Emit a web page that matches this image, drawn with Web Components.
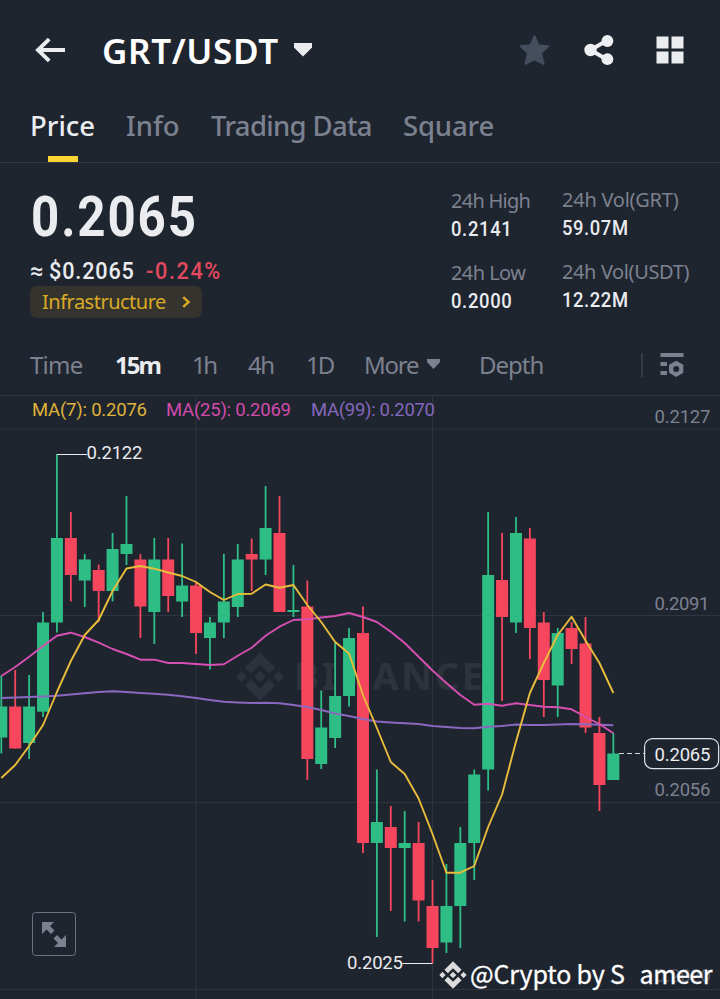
<!DOCTYPE html>
<html lang="en">
<head>
<meta charset="utf-8">
<title>GRT/USDT</title>
<style>
  body {
    margin: 0;
    background: #1f252f;
    color: #eaecef;
    font-family: "Noto Sans", sans-serif;
    --muted: #7c8190;
  }
</style>
</head>
<body>
<pair-app></pair-app>

<script>
// One line of text, tracked so that it fills the width given in "w".
// "squeeze" narrows the glyphs, for the condensed numerals.
class FitText extends HTMLElement {
  constructor() {
    super();
    this.attachShadow({ mode: 'open' });
  }

  connectedCallback() {
    const w = Number(this.getAttribute('w'));
    const squeeze = Number(this.getAttribute('squeeze') || 1);
    this.shadowRoot.innerHTML = `
      <style>
        :host { display: block; flex: none; width: ${w}px; white-space: nowrap; }
        span { display: block; width: max-content; transform: scaleX(${squeeze}); transform-origin: 0 50%; }
      </style>
      <span><slot></slot></span>
    `;
    const span = this.shadowRoot.querySelector('span');
    const natural = span.offsetWidth;
    span.style.letterSpacing = `${(w / squeeze - natural) / this.textContent.length}px`;
  }
}

class PairHeader extends HTMLElement {
  constructor() {
    super();
    this.attachShadow({ mode: 'open' });
  }

  connectedCallback() {
    this.shadowRoot.innerHTML = `
      <style>
        :host { display: flex; align-items: center; height: 100px; padding: 0 36px 0 35px; box-sizing: border-box; }
        svg { display: block; flex: none; }
        .title { margin: 2px 15px 0 37px; font-size: 35px; font-weight: 650; line-height: 50px; color: #fff; }
        .actions { display: flex; align-items: center; margin-left: auto; }
        .share { margin: 0 42px 0 34px; }
      </style>
      <svg width="30" height="26" viewBox="0 0 30 26" fill="none" stroke="#eaecef" stroke-width="3.9">
        <path d="M30 13H3M14.2 2.2 3 13l11.2 10.8"/>
      </svg>
      <fit-text class="title" w="177">GRT/USDT</fit-text>
      <svg width="18" height="14" viewBox="0 0 18 14" fill="#eaecef"><path d="M0 0h18v4.5L9 13.5 0 4.5z"/></svg>
      <div class="actions">
        <svg width="31" height="31" viewBox="0 .5 31 31" fill="#454e5d" stroke="#454e5d" stroke-width="1.6" stroke-linejoin="round">
          <path d="M15.5 1.2 19.6 10.6 29.6 11.6 22.2 18.6 24.8 29.5 15.5 25 6.2 29.5 8.8 18.6 1.4 11.6 11.4 10.6z"/>
        </svg>
        <svg class="share" width="30" height="31" viewBox="0 .5 30 31" fill="#eeeff3">
          <path d="M23 6 6.5 15.5 23 25" fill="none" stroke="#eeeff3" stroke-width="4"/>
          <circle cx="6.5" cy="15.5" r="6.2"/><circle cx="23.4" cy="6.5" r="5.9"/><circle cx="23.4" cy="24.7" r="5.9"/>
        </svg>
        <svg width="28" height="28" viewBox="0 0 28 28" fill="#eaecef">
          <path d="M.5.5h12v12H.5zM15.5.5h12v12h-12zM.5 15.5h12v12H.5zM15.5 15.5h12v12h-12z"/>
        </svg>
      </div>
    `;
  }
}

class PairTabs extends HTMLElement {
  constructor() {
    super();
    this.attachShadow({ mode: 'open' });
  }

  connectedCallback() {
    this.shadowRoot.innerHTML = `
      <style>
        :host {
          display: flex; gap: 31px; height: 63px; padding-left: 30px; box-sizing: border-box;
          border-bottom: 1px solid #303641;
          font-size: 27.5px; font-weight: 500; line-height: 52px; color: var(--muted);
        }
        .tab { display: flex; flex-direction: column; align-items: center; justify-content: space-between; }
        .active { color: #eaecef; }
        .active::after { content: ""; width: 30px; height: 6px; background: #fcd535; }
      </style>
      <div class="tab active"><fit-text w="65">Price</fit-text></div>
      <div class="tab"><fit-text w="54">Info</fit-text></div>
      <div class="tab"><fit-text w="161">Trading Data</fit-text></div>
      <div class="tab"><fit-text w="91">Square</fit-text></div>
    `;
  }
}

class StatItem extends HTMLElement {
  constructor() {
    super();
    this.attachShadow({ mode: 'open' });
  }

  connectedCallback() {
    this.shadowRoot.innerHTML = `
      <style>
        :host { display: block; }
        .label { height: 29px; font-size: 20px; line-height: 29px; color: var(--muted); }
        .value { height: 29px; font: 500 20px/29px Roboto, sans-serif; }
      </style>
      <fit-text class="label" w="${this.getAttribute('lw')}">${this.getAttribute('label')}</fit-text>
      <fit-text class="value" squeeze="0.92" w="${this.getAttribute('vw')}">${this.getAttribute('value')}</fit-text>
    `;
  }
}

class PriceSummary extends HTMLElement {
  constructor() {
    super();
    this.attachShadow({ mode: 'open' });
  }

  connectedCallback() {
    this.shadowRoot.innerHTML = `
      <style>
        :host { display: flex; height: 172px; box-sizing: border-box; padding-left: 30px; }
        .main { width: 421px; padding-top: 26px; }
        .price { font: 700 56px/56px Roboto, sans-serif; height: 56px; margin-left: 1px; }
        .sub { display: flex; height: 26px; margin-top: 13px; font: 500 23.5px/26px Roboto, sans-serif; }
        .usd { margin: 0 11px 0 6px; }
        .down { color: #e2495f; }
        .tag {
          display: flex; align-items: center; gap: 16px; width: 172px; height: 32px; margin-top: 2px;
          padding-left: 12px; box-sizing: border-box; border-radius: 7px;
          background: #35332d; color: #d9ab25; font-size: 20px; line-height: 30px;
        }
        .tag fit-text { height: 31px; }
        .col { display: flex; flex-direction: column; gap: 14px; width: 111px; padding-top: 23px; }
        .col:last-child { padding-top: 22px; }
      </style>
      <div class="main">
        <fit-text class="price" squeeze="0.88" w="167">0.2065</fit-text>
        <div class="sub">
          <fit-text w="13">≈</fit-text>
          <fit-text class="usd" squeeze="0.92" w="86">$0.2065</fit-text>
          <fit-text class="down" squeeze="0.92" w="76">-0.24%</fit-text>
        </div>
        <div class="tag">
          <fit-text w="124">Infrastructure</fit-text>
          <svg width="9" height="12" viewBox="0 0 9 12" fill="none" stroke="#d9ab25" stroke-width="2.4"><path d="M1.2 1.2 6.6 6l-5.4 4.8"/></svg>
        </div>
      </div>
      <div class="col">
        <stat-item label="24h High" lw="79" value="0.2141" vw="61"></stat-item>
        <stat-item label="24h Low" lw="74" value="0.2000" vw="61"></stat-item>
      </div>
      <div class="col">
        <stat-item label="24h Vol(GRT)" lw="116" value="59.07M" vw="67"></stat-item>
        <stat-item label="24h Vol(USDT)" lw="127" value="12.22M" vw="67"></stat-item>
      </div>
    `;
  }
}

class IntervalBar extends HTMLElement {
  constructor() {
    super();
    this.attachShadow({ mode: 'open' });
  }

  connectedCallback() {
    this.shadowRoot.innerHTML = `
      <style>
        :host {
          display: flex; align-items: center; gap: 32px; height: 60px; padding: 0 36px 0 30px;
          box-sizing: border-box; font-size: 24px; line-height: 40px; color: var(--muted);
        }
        .active { color: #eaecef; font-weight: 700; }
        .more { display: flex; align-items: center; gap: 9px; margin: 0 7px 0 -1px; }
        .more svg { margin-top: -2px; }
        .tools { display: flex; align-items: center; gap: 17px; margin-left: auto; }
        .tools::before { content: ""; width: 2px; height: 24px; background: #343b47; }
        svg { display: block; }
      </style>
      <fit-text w="53">Time</fit-text>
      <fit-text class="active" w="45">15m</fit-text>
      <fit-text w="24">1h</fit-text>
      <fit-text w="26">4h</fit-text>
      <fit-text w="27">1D</fit-text>
      <div class="more">
        <fit-text w="54">More</fit-text>
        <svg width="13" height="10" viewBox="0 0 13 10" fill="#7c8190"><path d="M0 0h13v3L6.5 10 0 3z"/></svg>
      </div>
      <fit-text w="64">Depth</fit-text>
      <div class="tools">
        <svg width="24" height="24" viewBox="0 0 24 24" fill="#7c8190">
          <path d="M.5 0h23v4H.5zM.5 9h6.5v4H.5zM.5 18h6.5v4H.5z"/>
          <path fill-rule="evenodd" d="M16.2 7.8 23.3 11.8v8L16.2 24 9 19.8v-8zM16.2 13a3 3 0 1 0 0 6 3 3 0 1 0 0-6z"/>
        </svg>
      </div>
    `;
  }
}

const UP = '#2ebd85';
const DOWN = '#f6465d';
const STEP = 13.91;
const FIRST_X = 1.3;

// wick top, body top, body bottom, wick bottom, rising
const CANDLES = [
  [675.5, 706.5, 737.5, 753.5, 1], [670, 706.5, 748.5, 748.5, 0], [675, 706.5, 743, 759, 1],
  [612, 622.5, 711.7, 717, 1], [454, 538, 622.5, 632.5, 1], [512, 538, 575, 601.5, 0],
  [554, 559.5, 580.5, 607, 1], [564.5, 570, 591, 622, 0], [533, 549, 591, 601.5, 1],
  [496, 544, 554, 565, 1], [554, 559.5, 606.5, 638, 0], [538, 559.5, 612, 644, 1],
  [538, 559.5, 596, 612, 0], [543.5, 585.5, 601.5, 617, 1], [582, 585.5, 633, 654, 0],
  [617, 622.5, 638, 669.5, 1], [554, 601.5, 622.5, 638, 1], [544, 559.5, 607, 617, 1],
  [538.5, 554, 559.5, 591, 0], [486, 528, 559.5, 575, 1], [496, 533, 612, 612, 0],
  [565, 610, 612, 617, 1], [580.5, 606.5, 759, 780, 0], [690.5, 727.5, 764, 769, 1],
  [643, 696, 738, 748, 1], [628, 638, 696, 706.5, 1], [606.5, 633, 843, 853, 0],
  [769.5, 822, 843, 937, 1], [806, 827, 848, 911, 0], [811, 843, 848, 921.5, 1],
  [822, 843, 900.5, 921.5, 0], [880, 906, 948, 963.5, 0], [864, 906, 942.5, 953, 1],
  [827, 843, 906, 948, 1], [769.5, 774.5, 843, 880, 1], [512, 575, 769.5, 790.5, 1],
  [533, 580, 617, 701, 0], [517, 533, 622.5, 633, 1], [528, 538.5, 628, 659, 0],
  [612, 622.5, 680, 717, 0], [628, 633, 685.5, 717, 1], [622, 628, 649, 664, 0],
  [617, 643.5, 727.5, 733, 0], [717, 733, 785, 811, 0], [733, 753.5, 780, 780, 1]
];

const MA7 = [778, 765, 746, 725, 692, 661, 635, 620, 591, 568.5, 566, 568.7, 572.5, 576, 582, 592, 600,
  594, 593.7, 584.5, 587.7, 585, 605, 622, 642, 653.5, 695, 728, 762, 774, 798.5, 834, 872.7, 872.7, 866,
  827, 794.5, 741.7, 693, 663, 635, 616.7, 640.5, 663, 693];
const MA25 = [676, 667, 656.7, 646, 635.7, 632.7, 637, 642.7, 649, 654, 659.7, 659.7, 663, 663, 664, 665,
  664.3, 655.7, 647.7, 635.7, 626.7, 620, 619.3, 617.5, 616, 613, 617, 622, 631.7, 643, 656.7, 670.5, 683,
  695, 704.7, 703.7, 705.7, 703.3, 705, 706.7, 707.3, 709.3, 717, 724, 733.3];
const MA99 = [698, 697.5, 697, 696.5, 695.7, 694.5, 693.3, 692, 691.2, 692, 693, 693.7, 694.7, 696.3, 698,
  700, 701.7, 702.5, 703, 702.7, 703.3, 705, 707, 710, 713.5, 716, 719, 721.5, 722.5, 723.3, 724, 726, 727,
  728, 728.3, 726.7, 726, 724.5, 725, 725, 724.5, 724, 724.2, 724.7, 725.3];

const LOGO = 'M0-24 15-9 9-3 0-12-9-3-15-9zM0 24 15 9 9 3 0 12-9 3-15 9zM0-5.8 5.8 0 0 5.8-5.8 0zM-18.5-5.5-13 0l-5.5 5.5L-24 0zM18.5-5.5 24 0l-5.5 5.5L13 0z';

class CandleChart extends HTMLElement {
  constructor() {
    super();
    this.attachShadow({ mode: 'open' });
  }

  x(i) {
    return FIRST_X + i * STEP;
  }

  candle([hi, top, bottom, lo, rising], i) {
    const x = this.x(i);
    return `<g fill="${rising ? UP : DOWN}">
      <rect x="${x - 0.9}" y="${hi}" width="1.8" height="${lo - hi}"/>
      <rect x="${x - 6}" y="${top}" width="12" height="${bottom - top}"/>
    </g>`;
  }

  average(values, color) {
    const points = values.map((y, i) => `${this.x(i)},${y}`).join(' ');
    return `<polyline points="${points}" fill="none" stroke="${color}" stroke-width="1.9" stroke-linejoin="round"/>`;
  }

  label(x, y, width, text, color) {
    return `<text x="${x}" y="${y}" textLength="${width}" fill="${color}">${text}</text>`;
  }

  connectedCallback() {
    this.shadowRoot.innerHTML = `
      <style>
        :host { display: block; height: 604px; }
        svg { display: block; }
        text { font-family: Roboto, sans-serif; font-size: 18.5px; }
        .mark { font-family: "Noto Sans", sans-serif; font-weight: 700; font-size: 38px; }
        .credit { font-family: "Noto Sans CJK SC", sans-serif; font-weight: 400; font-size: 25px; stroke: #fff; stroke-width: .3px; }
      </style>
      <svg width="720" height="604" viewBox="0 395 720 604">
        <path d="M0 395.5h720M0 429h720M0 615.5h720M0 802.5h720M0 989.5h720M196 395v604M432.5 395v604" stroke="#2f353f" fill="none"/>
        <g fill="#2d333d">
          <path transform="translate(260 676.5)" d="${LOGO}"/>
          <text class="mark" x="294" y="690" textLength="189">BINANCE</text>
        </g>

        ${this.label(32, 416, 115, 'MA(7): 0.2076', '#dfb23a')}
        ${this.label(166, 416, 125, 'MA(25): 0.2069', '#d24bac')}
        ${this.label(311, 416, 124, 'MA(99): 0.2070', '#8468bb')}
        ${this.label(654.5, 423, 56, '0.2127', '#7c8190')}
        ${this.label(654.5, 610, 55, '0.2091', '#7c8190')}
        ${this.label(654.5, 796, 56, '0.2056', '#7c8190')}
        ${this.label(655, 982, 56, '0.2020', '#4f5561')}

        ${CANDLES.map((c, i) => this.candle(c, i)).join('')}
        ${this.average(MA99, '#8a68bf')}
        ${this.average(MA25, '#d64fb2')}
        ${this.average(MA7, '#e8bd3c')}

        <path d="M57 454.5h30M402.5 963.5h30" stroke="#eaecef" stroke-width="1.2"/>
        ${this.label(86.5, 459, 56, '0.2122', '#eaecef')}
        ${this.label(347, 969, 56, '0.2025', '#eaecef')}

        <path d="M619 753.5h25" stroke="#d5d8dd" stroke-width="1.2" stroke-dasharray="5 3"/>
        <rect x="644.6" y="738.6" width="74" height="30" rx="8" fill="#1f252f" stroke="#dfe1e6" stroke-width="1.2"/>
        ${this.label(654.5, 761, 56, '0.2065', '#eaecef')}

        <g fill="#7c8190">
          <rect x="32.5" y="912.5" width="43" height="43" rx="3" fill="none" stroke="#6b7180"/>
          <path d="M42 922h12l-4 4 4.5 4.5-3.5 3.5-4.5-4.5L42 934zM66 947H54l4-4-4.5-4.5L57 935l4.5 4.5L66 935z"/>
        </g>

        <path transform="translate(453 975) scale(.57)" d="${LOGO}" fill="#dcdcdc"/>
        <g fill="#fff">
          <text class="credit" x="470" y="984" textLength="155">@Crypto by S</text>
          <text class="credit" x="639.5" y="984" textLength="73">ameer</text>
        </g>
      </svg>
    `;
  }
}

class PairApp extends HTMLElement {
  constructor() {
    super();
    this.attachShadow({ mode: 'open' });
  }

  connectedCallback() {
    this.shadowRoot.innerHTML = `
      <style>
        :host { display: flex; flex-direction: column; width: 720px; height: 999px; overflow: hidden; }
      </style>
      <pair-header></pair-header>
      <pair-tabs></pair-tabs>
      <price-summary></price-summary>
      <interval-bar></interval-bar>
      <candle-chart></candle-chart>
    `;
  }
}

customElements.define('fit-text', FitText);
customElements.define('pair-header', PairHeader);
customElements.define('pair-tabs', PairTabs);
customElements.define('stat-item', StatItem);
customElements.define('price-summary', PriceSummary);
customElements.define('interval-bar', IntervalBar);
customElements.define('candle-chart', CandleChart);
customElements.define('pair-app', PairApp);
</script>
</body>
</html>
